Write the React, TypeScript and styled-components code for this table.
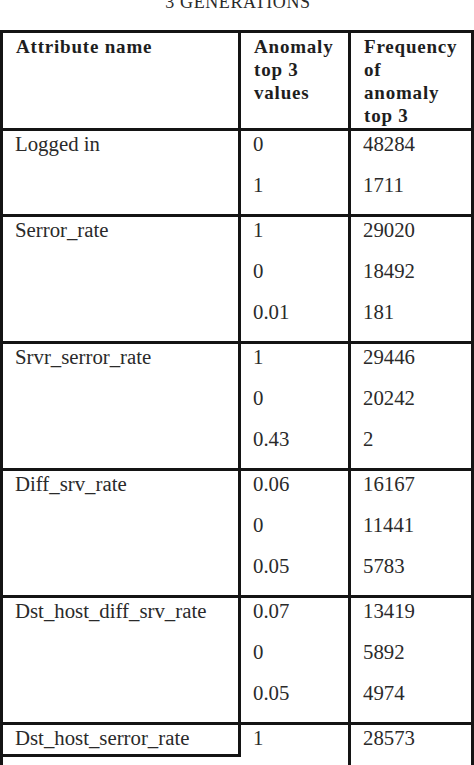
import React from "react";
import styled, { createGlobalStyle } from "styled-components";

const Global = createGlobalStyle`
  html, body { margin: 0; padding: 0; background: #ffffff; }
  body { font-family: "Liberation Serif", "Times New Roman", serif; color: #222; overflow: hidden; }
`;

const Page = styled.div`
  width: 474px;
  height: 765px;
  overflow: hidden;
`;

const Caption = styled.div`
  margin: -7px 0 19px;
  line-height: 18px;
  font-size: 18px;
  letter-spacing: 0.6px;
  text-align: center;
  color: #2a2a2a;
  padding-left: 2px;
`;

const Table = styled.div`
  border: 3px solid #141414;
  border-bottom: none;
  display: flex;
  flex-direction: column;
`;

const Row = styled.div<{ $last?: boolean }>`
  display: flex;
  align-items: stretch;
  border-bottom: ${(p) => (p.$last ? "none" : "3px solid #141414")};
`;

/* widths include the 3px right rule of the first two columns */
const widths = [238, 110, 120];

const Cell = styled.div<{ $col: number; $cut?: boolean }>`
  width: ${(p) => widths[p.$col]}px;
  flex: none;
  box-sizing: border-box;
  border-right: ${(p) => (p.$col < 2 ? "3px solid #141414" : "none")};
  padding: 1px 0 17px 12px;
  display: flex;
  flex-direction: column;
  gap: 17px;
  ${(p) =>
    p.$cut
      ? `align-self: flex-start; height: 32px; border-bottom: 3px solid #141414; overflow: visible;`
      : ``}
`;

const HeadCell = styled.div<{ $col: number }>`
  width: ${(p) => widths[p.$col]}px;
  flex: none;
  box-sizing: border-box;
  border-right: ${(p) => (p.$col < 2 ? "3px solid #141414" : "none")};
  padding: 2px 2px 1px 13px;
  font-weight: bold;
  font-size: 19px;
  line-height: 23px;
  letter-spacing: 0.8px;
  color: #1e1e1e;
  height: 95px;
`;

const Value = styled.div`
  font-size: 20.8px;
  line-height: 24px;
  height: 24px;
  white-space: nowrap;
  color: #2a2a2a;
`;

type RowData = { name: string; values: string[]; freqs: string[] };

const rows: RowData[] = [
  { name: "Logged in", values: ["0", "1"], freqs: ["48284", "1711"] },
  { name: "Serror_rate", values: ["1", "0", "0.01"], freqs: ["29020", "18492", "181"] },
  { name: "Srvr_serror_rate", values: ["1", "0", "0.43"], freqs: ["29446", "20242", "2"] },
  { name: "Diff_srv_rate", values: ["0.06", "0", "0.05"], freqs: ["16167", "11441", "5783"] },
  { name: "Dst_host_diff_srv_rate", values: ["0.07", "0", "0.05"], freqs: ["13419", "5892", "4974"] },
];

export default function App() {
  return (
    <Page>
      <Global />
      <Caption>3 GENERATIONS</Caption>
      <Table>
        <Row>
          <HeadCell $col={0}>Attribute name</HeadCell>
          <HeadCell $col={1}>
            Anomaly
            <br />
            top 3
            <br />
            values
          </HeadCell>
          <HeadCell $col={2}>
            Frequency
            <br />
            of
            <br />
            anomaly
            <br />
            top 3
          </HeadCell>
        </Row>
        {rows.map((r) => (
          <Row key={r.name}>
            <Cell $col={0}>
              <Value>{r.name}</Value>
            </Cell>
            <Cell $col={1}>
              {r.values.map((v, i) => (
                <Value key={i}>{v}</Value>
              ))}
            </Cell>
            <Cell $col={2}>
              {r.freqs.map((v, i) => (
                <Value key={i}>{v}</Value>
              ))}
            </Cell>
          </Row>
        ))}
        <Row $last>
          <Cell $col={0} $cut>
            <Value>Dst_host_serror_rate</Value>
          </Cell>
          <Cell $col={1}>
            <Value>1</Value>
            <Value />
          </Cell>
          <Cell $col={2}>
            <Value>28573</Value>
            <Value />
          </Cell>
        </Row>
      </Table>
    </Page>
  );
}
